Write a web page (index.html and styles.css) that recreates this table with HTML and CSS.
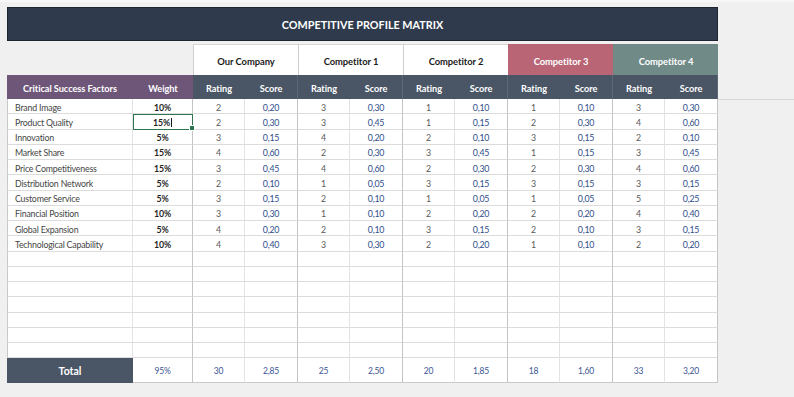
FILE: index.html
```html
<!DOCTYPE html>
<html lang="en">
<head>
<meta charset="utf-8">
<title>Competitive Profile Matrix</title>
<link rel="stylesheet" href="styles.css">
</head>
<body>
<div class="page">
  <div class="title">COMPETITIVE PROFILE MATRIX</div>
  <div class="sheet">
    <div class="matrix">
      <div class="corner"></div>
      <div class="co">Our Company</div>
      <div class="co">Competitor 1</div>
      <div class="co">Competitor 2</div>
      <div class="co co-red">Competitor 3</div>
      <div class="co co-teal">Competitor 4</div>

      <div class="hd hd-purple">Critical Success Factors</div>
      <div class="hd hd-purple">Weight</div>
      <div class="hd">Rating</div><div class="hd hd-end">Score</div>
      <div class="hd">Rating</div><div class="hd hd-end">Score</div>
      <div class="hd">Rating</div><div class="hd hd-end">Score</div>
      <div class="hd">Rating</div><div class="hd hd-end">Score</div>
      <div class="hd">Rating</div><div class="hd hd-end">Score</div>

      <div class="c nm">Brand Image</div><div class="c wt">10%</div>
      <div class="c rt">2</div><div class="c sc">0,20</div><div class="c rt">3</div><div class="c sc">0,30</div><div class="c rt">1</div><div class="c sc">0,10</div><div class="c rt">1</div><div class="c sc">0,10</div><div class="c rt">3</div><div class="c sc">0,30</div>

      <div class="c nm">Product Quality</div><div class="c wt wt-sel">15%<span class="caret"></span></div>
      <div class="c rt">2</div><div class="c sc">0,30</div><div class="c rt">3</div><div class="c sc">0,45</div><div class="c rt">1</div><div class="c sc">0,15</div><div class="c rt">2</div><div class="c sc">0,30</div><div class="c rt">4</div><div class="c sc">0,60</div>

      <div class="c nm">Innovation</div><div class="c wt">5%</div>
      <div class="c rt">3</div><div class="c sc">0,15</div><div class="c rt">4</div><div class="c sc">0,20</div><div class="c rt">2</div><div class="c sc">0,10</div><div class="c rt">3</div><div class="c sc">0,15</div><div class="c rt">2</div><div class="c sc">0,10</div>

      <div class="c nm">Market Share</div><div class="c wt">15%</div>
      <div class="c rt">4</div><div class="c sc">0,60</div><div class="c rt">2</div><div class="c sc">0,30</div><div class="c rt">3</div><div class="c sc">0,45</div><div class="c rt">1</div><div class="c sc">0,15</div><div class="c rt">3</div><div class="c sc">0,45</div>

      <div class="c nm">Price Competitiveness</div><div class="c wt">15%</div>
      <div class="c rt">3</div><div class="c sc">0,45</div><div class="c rt">4</div><div class="c sc">0,60</div><div class="c rt">2</div><div class="c sc">0,30</div><div class="c rt">2</div><div class="c sc">0,30</div><div class="c rt">4</div><div class="c sc">0,60</div>

      <div class="c nm">Distribution Network</div><div class="c wt">5%</div>
      <div class="c rt">2</div><div class="c sc">0,10</div><div class="c rt">1</div><div class="c sc">0,05</div><div class="c rt">3</div><div class="c sc">0,15</div><div class="c rt">3</div><div class="c sc">0,15</div><div class="c rt">3</div><div class="c sc">0,15</div>

      <div class="c nm">Customer Service</div><div class="c wt">5%</div>
      <div class="c rt">3</div><div class="c sc">0,15</div><div class="c rt">2</div><div class="c sc">0,10</div><div class="c rt">1</div><div class="c sc">0,05</div><div class="c rt">1</div><div class="c sc">0,05</div><div class="c rt">5</div><div class="c sc">0,25</div>

      <div class="c nm">Financial Position</div><div class="c wt">10%</div>
      <div class="c rt">3</div><div class="c sc">0,30</div><div class="c rt">1</div><div class="c sc">0,10</div><div class="c rt">2</div><div class="c sc">0,20</div><div class="c rt">2</div><div class="c sc">0,20</div><div class="c rt">4</div><div class="c sc">0,40</div>

      <div class="c nm">Global Expansion</div><div class="c wt">5%</div>
      <div class="c rt">4</div><div class="c sc">0,20</div><div class="c rt">2</div><div class="c sc">0,10</div><div class="c rt">3</div><div class="c sc">0,15</div><div class="c rt">2</div><div class="c sc">0,10</div><div class="c rt">3</div><div class="c sc">0,15</div>

      <div class="c nm">Technological Capability</div><div class="c wt">10%</div>
      <div class="c rt">4</div><div class="c sc">0,40</div><div class="c rt">3</div><div class="c sc">0,30</div><div class="c rt">2</div><div class="c sc">0,20</div><div class="c rt">1</div><div class="c sc">0,10</div><div class="c rt">2</div><div class="c sc">0,20</div>

      <div class="c nm"></div><div class="c wt"></div><div class="c rt"></div><div class="c sc"></div><div class="c rt"></div><div class="c sc"></div><div class="c rt"></div><div class="c sc"></div><div class="c rt"></div><div class="c sc"></div><div class="c rt"></div><div class="c sc"></div>
      <div class="c nm"></div><div class="c wt"></div><div class="c rt"></div><div class="c sc"></div><div class="c rt"></div><div class="c sc"></div><div class="c rt"></div><div class="c sc"></div><div class="c rt"></div><div class="c sc"></div><div class="c rt"></div><div class="c sc"></div>
      <div class="c nm"></div><div class="c wt"></div><div class="c rt"></div><div class="c sc"></div><div class="c rt"></div><div class="c sc"></div><div class="c rt"></div><div class="c sc"></div><div class="c rt"></div><div class="c sc"></div><div class="c rt"></div><div class="c sc"></div>
      <div class="c nm"></div><div class="c wt"></div><div class="c rt"></div><div class="c sc"></div><div class="c rt"></div><div class="c sc"></div><div class="c rt"></div><div class="c sc"></div><div class="c rt"></div><div class="c sc"></div><div class="c rt"></div><div class="c sc"></div>
      <div class="c nm"></div><div class="c wt"></div><div class="c rt"></div><div class="c sc"></div><div class="c rt"></div><div class="c sc"></div><div class="c rt"></div><div class="c sc"></div><div class="c rt"></div><div class="c sc"></div><div class="c rt"></div><div class="c sc"></div>
      <div class="c nm"></div><div class="c wt"></div><div class="c rt"></div><div class="c sc"></div><div class="c rt"></div><div class="c sc"></div><div class="c rt"></div><div class="c sc"></div><div class="c rt"></div><div class="c sc"></div><div class="c rt"></div><div class="c sc"></div>
      <div class="c nm"></div><div class="c wt"></div><div class="c rt"></div><div class="c sc"></div><div class="c rt"></div><div class="c sc"></div><div class="c rt"></div><div class="c sc"></div><div class="c rt"></div><div class="c sc"></div><div class="c rt"></div><div class="c sc"></div>

      <div class="tot-label">Total</div><div class="c tot tot-wt">95%</div>
      <div class="c tot">30</div><div class="c tot tot-end">2,85</div>
      <div class="c tot">25</div><div class="c tot tot-end">2,50</div>
      <div class="c tot">20</div><div class="c tot tot-end">1,85</div>
      <div class="c tot">18</div><div class="c tot tot-end">1,60</div>
      <div class="c tot">33</div><div class="c tot tot-end">3,20</div>
    </div>
    <div class="filler"></div>
  </div>
</div>
</body>
</html>
```

FILE: styles.css
```css
* { box-sizing: border-box; margin: 0; padding: 0; }

html, body {
  background: #f0f0f0;
}

body {
  width: 794px;
  height: 397px;
  overflow: hidden;
  font-family: Lato, "Open Sans", sans-serif;
  border-top: 2px solid #f7f7f7;
}

.page {
  padding: 5px 0 0 7px;
}

.title {
  width: 711px;
  height: 34px;
  background: #2f3b4d;
  border: 1px solid #1d2532;
  color: #ffffff;
  font-weight: 700;
  font-size: 10.8px;
  display: flex;
  align-items: center;
  justify-content: center;
  padding-top: 1px;
}

.sheet {
  display: flex;
  margin-top: 3px;
}

.matrix {
  width: 711px;
  display: grid;
  grid-template-columns: 126px 60px repeat(5, 52px 53px);
  grid-template-rows: 31px 24px repeat(17, 15.25px) 24.5px;
  font-size: 8.8px;
  letter-spacing: -0.2px;
}

.filler {
  flex: 1;
  margin-top: 55px;
  height: 1px;
  background: #d6d6d6;
}

.corner {
  grid-column: span 2;
}

.co {
  grid-column: span 2;
  background: #ffffff;
  border-top: 1px solid #d6d6d6;
  border-left: 1px solid #cfcfcf;
  display: flex;
  align-items: center;
  justify-content: center;
  padding-top: 2px;
  font-weight: 700;
  font-size: 9.4px;
  letter-spacing: -0.05px;
  color: #1a1a1a;
}

.co-red {
  background: #b96576;
  color: #ffffff;
  border-color: #b96576;
}

.co-teal {
  background: #6f8a87;
  color: #ffffff;
  border-color: #6f8a87;
}

.hd {
  background: #4a5666;
  color: #ffffff;
  font-weight: 700;
  font-size: 9.2px;
  letter-spacing: -0.05px;
  display: flex;
  align-items: center;
  justify-content: center;
  padding-top: 2px;
}

.hd-end {
  border-right: 1px solid #5d6877;
}

.hd-purple {
  background: #6e5679;
}

.c {
  border-right: 1px solid #e3e3e3;
  border-bottom: 1px solid #dcdcdc;
  background: #ffffff;
  display: flex;
  align-items: center;
  justify-content: center;
  padding-top: 2px;
  color: #5a5a5a;
}

.nm {
  justify-content: flex-start;
  padding-left: 7px;
  color: #454545;
  border-left: 1px solid #c9c9c9;
}

.wt {
  font-weight: 700;
  color: #1f1f1f;
  border-right-color: #c4c4c4;
}

.wt-sel {
  position: relative;
  outline: 1px solid #2f7650;
  outline-offset: -1px;
  border-right-color: #2f7650;
}

.wt-sel::after {
  content: "";
  position: absolute;
  right: -3px;
  bottom: -2px;
  width: 4px;
  height: 4px;
  background: #2f7650;
  border: 1px solid #ffffff;
}

.caret {
  display: inline-block;
  width: 1px;
  height: 9px;
  margin-left: 1px;
  background: #1a1a1a;
}

.sc {
  color: #2f4d8b;
  border-right-color: #c4c4c4;
}

.tot-label {
  background: #4a5566;
  color: #ffffff;
  font-weight: 700;
  font-size: 10.5px;
  letter-spacing: 0;
  display: flex;
  align-items: center;
  justify-content: center;
  padding-top: 1px;
}

.tot {
  color: #3b5595;
  font-size: 8.5px;
  border-bottom: 1px solid #c9c9c9;
}

.tot-wt,
.tot-end {
  border-right-color: #c4c4c4;
}
```
